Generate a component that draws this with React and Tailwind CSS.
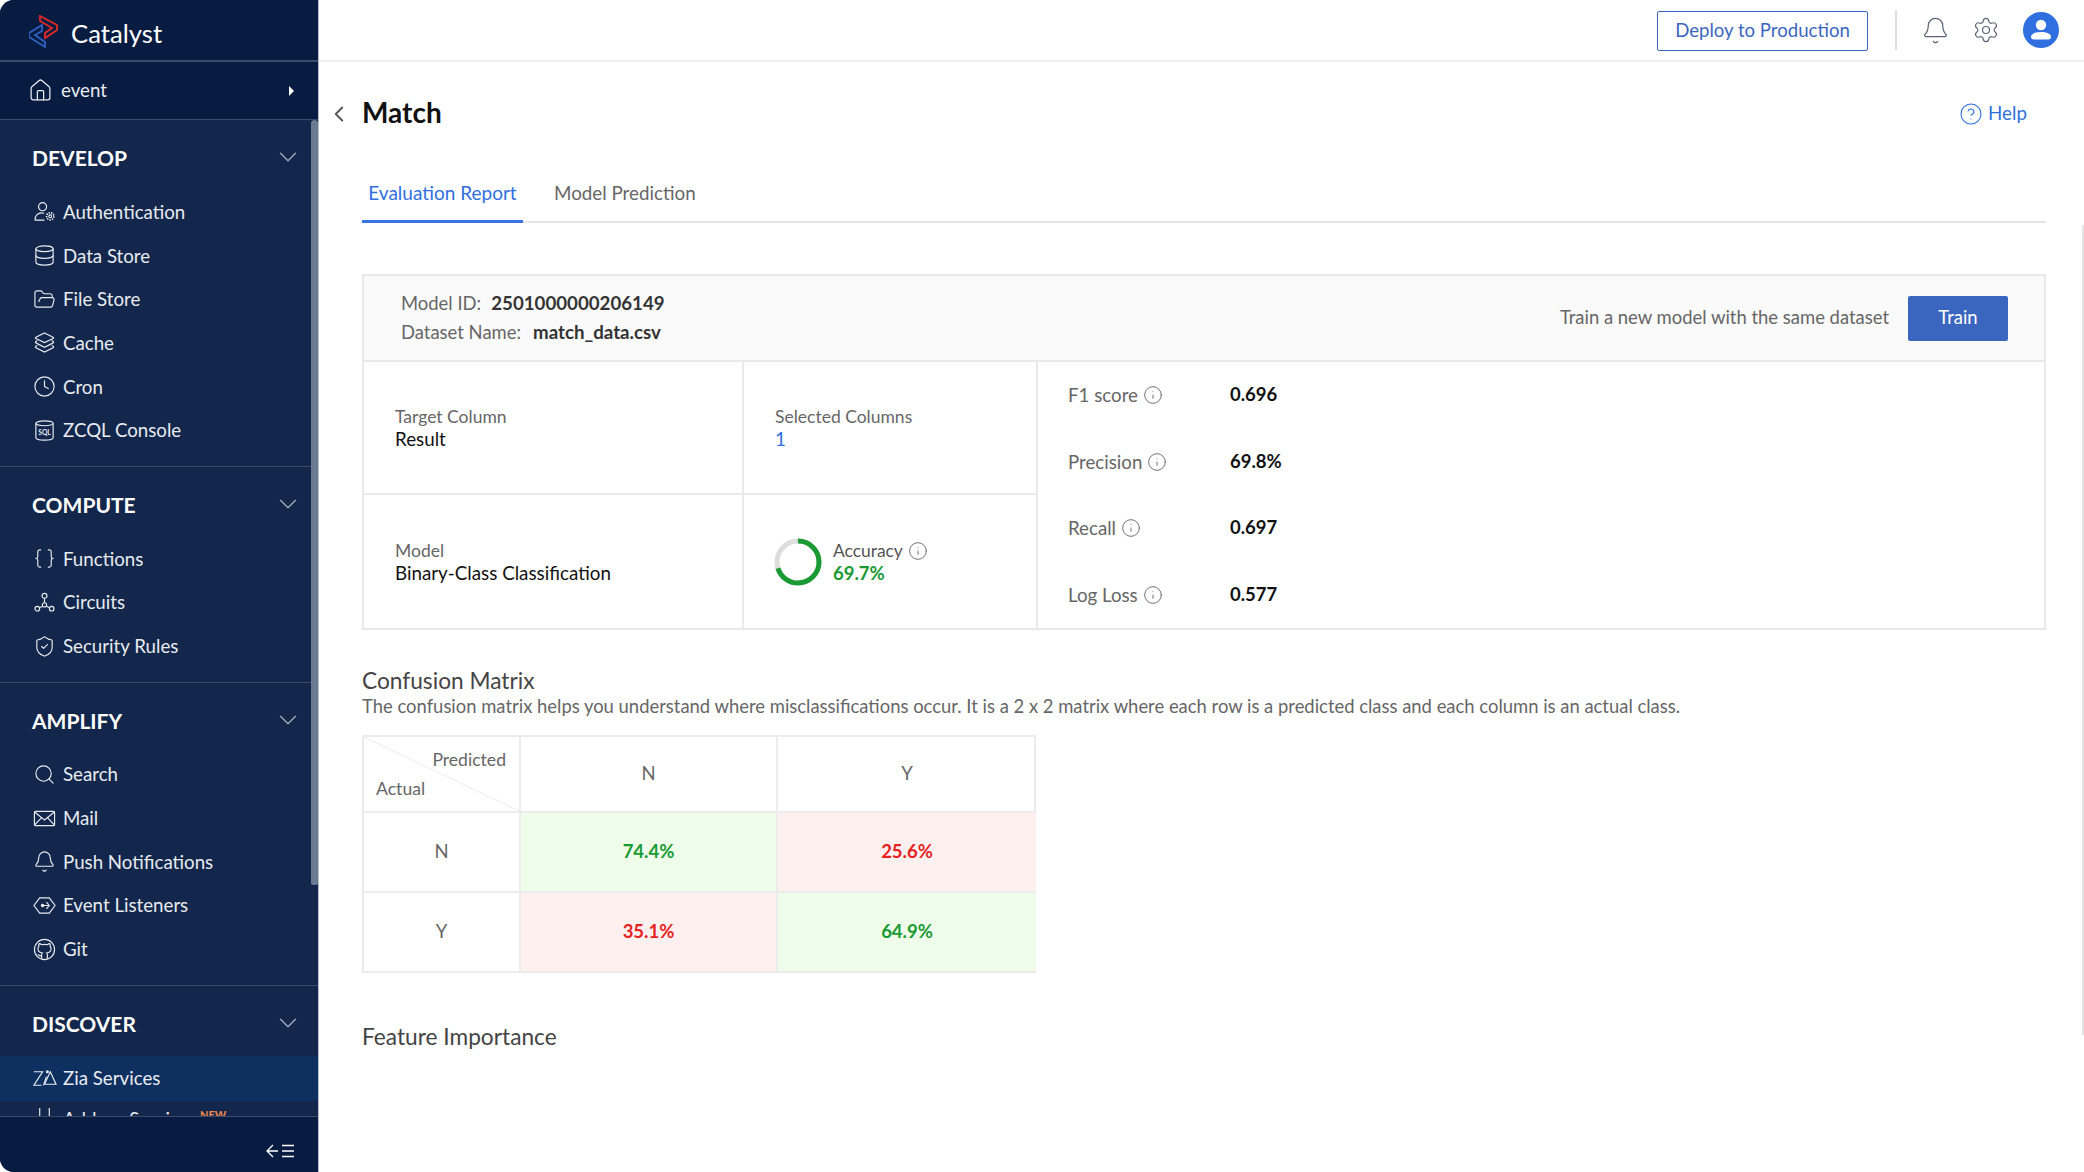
import React from 'react';
import { House, Database, FolderOpen, Clock, Braces, Search, Bell, ShieldCheck, ChevronDown, ChevronLeft, Settings, CircleHelp, Info } from 'lucide-react';

const AuthIcon = (p) => (
    <svg viewBox="0 0 24 24" fill="none" stroke="currentColor" strokeWidth="1.2" {...p}>
        <circle cx="10" cy="7" r="4.2" />
        <path d="M2 21c0-4.5 3-7.5 7-7.5 1 0 1.8.1 2.6.4M2 21h10" />
        <circle cx="18" cy="17" r="1.5" />
        <circle cx="18" cy="17" r="3.8" strokeDasharray="1.6 1" strokeWidth="1.6" />
    </svg>
);

const SqlIcon = (p) => (
    <svg viewBox="0 0 24 24" fill="none" stroke="currentColor" strokeWidth="1.2" {...p}>
        <ellipse cx="12" cy="4.5" rx="9" ry="2.5" />
        <path d="M3 4.5v15c0 1.4 4 2.5 9 2.5s9-1.1 9-2.5v-15" />
        <text x="12" y="16.5" textAnchor="middle" fontSize="7" fontWeight="700" fill="currentColor" stroke="none" fontFamily="Lato, sans-serif">SQL</text>
    </svg>
);

const CacheIcon = (p) => (
    <svg viewBox="0 0 24 24" fill="none" stroke="currentColor" strokeWidth="1.2" {...p}>
        <path d="M12 2 21 6.5c.6.4.6 1 0 1.4L12 12 3 7.9c-.6-.4-.6-1 0-1.4z" />
        <path d="M4.5 10 3 11c-.6.4-.6 1 0 1.4L12 17l9-4.6c.6-.4.6-1 0-1.4l-1.5-1" />
        <path d="M4.5 15 3 16c-.6.4-.6 1 0 1.4L12 22l9-4.6c.6-.4.6-1 0-1.4l-1.5-1" />
    </svg>
);

const CircuitIcon = (p) => (
    <svg viewBox="0 0 24 24" fill="none" stroke="currentColor" strokeWidth="1.2" {...p}>
        <circle cx="12" cy="5" r="2.6" />
        <circle cx="4.5" cy="18.5" r="2.4" />
        <circle cx="12" cy="14.5" r="2.2" />
        <circle cx="19.5" cy="18.5" r="2.4" />
        <path d="M12 7.6v4.7M10.2 16l-3.6 1.4M13.8 16l3.6 1.4" />
    </svg>
);

const MailIcon = (p) => (
    <svg viewBox="0 0 24 24" fill="none" stroke="currentColor" strokeWidth="1.2" {...p}>
        <rect x="1.5" y="4.5" width="21" height="15" rx="1" />
        <path d="M2 5.5l10 8 10-8M2 18.5l7-7.5M22 18.5l-7-7.5" />
    </svg>
);

const EventIcon = (p) => (
    <svg viewBox="0 0 24 24" fill="none" stroke="currentColor" strokeWidth="1.2" {...p}>
        <path d="M7 4h10l6 8-6 8H7l-6-8z" />
        <circle cx="10" cy="12" r="1.3" fill="currentColor" />
        <path d="M14 8.5 17 12l-3 3.5M10 12h6" />
    </svg>
);

const GitIcon = (p) => (
    <svg viewBox="0 0 24 24" fill="none" stroke="currentColor" strokeWidth="1.2" {...p}>
        <circle cx="12" cy="12" r="10.5" />
        <path d="M9 21v-3.2c0-1 .3-1.7.8-2.2-2.7-.3-4.6-1.4-4.6-4.4 0-1 .4-1.9 1-2.6-.1-.4-.4-1.4.1-2.6 0 0 1-.3 2.8 1 .9-.2 1.9-.3 2.9-.3s2 .1 2.9.3c1.8-1.3 2.8-1 2.8-1 .5 1.2.2 2.2.1 2.6.6.7 1 1.6 1 2.6 0 3-1.9 4.1-4.6 4.4.5.5.8 1.2.8 2.2V21" />
        <path d="M9 18.5c-2 .6-3-.3-3.8-1.6" />
    </svg>
);

const ZiaIcon = (p) => (
    <svg viewBox="0 0 26 24" fill="none" stroke="currentColor" strokeWidth="1.2" {...p}>
        <path d="M2 5h9L2 19h8" />
        <path d="M12 19l3-9" />
        <circle cx="16" cy="5" r="1" fill="currentColor" />
        <path d="M19 5l6 13H13z" />
    </svg>
);

const AddonIcon = (p) => (
    <svg viewBox="0 0 24 24" fill="none" stroke="currentColor" strokeWidth="1.2" {...p}>
        <path d="M7 1v9h10V1M12 10v12" />
    </svg>
);

const NavIcon = ({ icon: Icon, w = 23 }) => (
    <span className="w-[31px] h-[24px] flex items-center justify-center shrink-0 mr-[3px]">
        <Icon width={w} height={w} strokeWidth={1.2} />
    </span>
);

const sections = [
    { title: 'DEVELOP', items: [['Authentication', AuthIcon], ['Data Store', Database], ['File Store', FolderOpen], ['Cache', CacheIcon], ['Cron', Clock], ['ZCQL Console', SqlIcon]] },
    { title: 'COMPUTE', items: [['Functions', Braces], ['Circuits', CircuitIcon], ['Security Rules', ShieldCheck]] },
    { title: 'AMPLIFY', items: [['Search', Search], ['Mail', MailIcon], ['Push Notifications', Bell], ['Event Listeners', EventIcon], ['Git', GitIcon]] },
];

const SectionTitle = ({ title }) => (
    <div className="flex items-center justify-between pl-[32px] pr-[15px] h-[28px] mb-[18px]">
        <span className="text-[21px] font-bold text-white">{title}</span>
        <ChevronDown size={30} strokeWidth={1} className="text-[#a3adbd] -mt-[2px]" />
    </div>
);

const Sidebar = () => (
    <aside className="w-[319px] shrink-0 h-full bg-[#12274b] rounded-l-[14px] overflow-hidden flex flex-col relative text-[#e8ebf0] border-r border-[#b8bfca]">
        <div className="bg-[#081c42] h-[62px] shrink-0 flex items-center pl-[29px] pt-[4px] border-b-2 border-[#3a4a68]">
            <svg viewBox="29 15 30 34" width="30" height="34" fill="none" strokeWidth="1.8">
                <polygon points="40,16 57,25 57,30 45,38 45,33 52,28 40,21" stroke="#e22b27" />
                <polygon points="42,25 29,33 29,37 45,47 45,42 35,35 42,31" stroke="#2f62c5" />
            </svg>
            <span className="ml-[12px] mt-[3px] text-[25.7px] text-white leading-none">Catalyst</span>
        </div>
        <div className="bg-[#081c42] h-[58px] shrink-0 flex items-center pl-[28px] pr-[24px] border-b border-[#3a4a68]">
            <House size={25} strokeWidth={1.2} />
            <span className="ml-[8px] text-[18.7px] flex-1">event</span>
            <span className="w-0 h-0 border-y-[5px] border-y-transparent border-l-[5px] border-l-white" />
        </div>
        <div className="flex-1 overflow-hidden">
            {sections.map((s) => (
                <div key={s.title} className="pt-[24px] pb-[13.7px] border-b border-[#3a4a68] box-content">
                    <SectionTitle title={s.title} />
                    {s.items.map(([label, icon]) => (
                        <div key={label} className="h-[43.7px] flex items-center pl-[29px] text-[18.7px]">
                            <NavIcon icon={icon} />
                            <span>{label}</span>
                        </div>
                    ))}
                </div>
            ))}
            <div className="pt-[24px]">
                <SectionTitle title="DISCOVER" />
                <div className="h-[45px] flex items-center pl-[29px] text-[18.7px] bg-[#0d3060]">
                    <NavIcon icon={ZiaIcon} w={25} />
                    <span>Zia Services</span>
                </div>
                <div className="h-[36px] flex items-center pl-[29px] text-[18.7px] relative">
                    <NavIcon icon={AddonIcon} />
                    <span>Add-on Services</span>
                    <span className="absolute left-[200px] top-[6px] text-[11px] font-bold text-[#f08a4b]">NEW</span>
                </div>
            </div>
        </div>
        <div className="bg-[#081c42] h-[56px] shrink-0 border-t border-[#3a4a68] flex items-center justify-end pr-[24px] pt-[12px]">
            <svg width="28" height="14" viewBox="0 0 28 14" fill="none" stroke="#ffffff" strokeWidth="1.3">
                <path d="M7 1 1 7l6 6M1 7h11M16 1.5h12M16 7h12M16 12.5h12" />
            </svg>
        </div>
        <div className="absolute right-0 top-[120px] h-[765px] w-[7px] bg-[#6b7a90] rounded-t-[4px] rounded-b-[2px]" />
    </aside>
);

const Metric = ({ label, value }) => (
    <div className="flex-1 flex items-center pl-[30px]">
        <div className="w-[162px] flex items-center gap-[5px] text-[18.7px] text-[#666666]">
            <span>{label}</span>
            <Info size={20} strokeWidth={1.1} className="text-[#666666]" />
        </div>
        <span className="text-[18.5px] font-bold text-[#111111]">{value}</span>
    </div>
);

const Cell = ({ label, children }) => (
    <div className="h-full flex flex-col justify-center pl-[31px] text-[18.8px] leading-[22px]">
        <div className="text-[#666666] text-[17.5px]">{label}</div>
        {children}
    </div>
);

const Donut = () => (
    <svg width="48" height="48" viewBox="0 0 48 48" fill="none" strokeWidth="5">
        <circle cx="24" cy="24" r="21" stroke="#dddddd" />
        <circle cx="24" cy="24" r="21" stroke="#1a9a33" strokeDasharray="92 132" transform="rotate(-90 24 24)" />
    </svg>
);

const matrixCell = 'flex items-center justify-center border-l-2 border-t-2 border-[#ececec] text-[18.5px]';
const good = 'bg-[#eefde9] text-[#1a9a33] font-bold';
const bad = 'bg-[#fdf0ef] text-[#e5231f] font-bold';

const Matrix = () => (
    <div className="w-[674px] grid grid-cols-[157px_257px_260px] grid-rows-[76px_80px_80px] border-r-2 border-b-2 border-[#ececec] text-[#666666]">
        <div className="relative border-l-2 border-t-2 border-[#ececec] text-[17.6px]">
            <svg className="absolute inset-0 w-full h-full" viewBox="0 0 155 74" preserveAspectRatio="none">
                <line x1="0" y1="0" x2="155" y2="74" stroke="#ececec" />
            </svg>
            <span className="absolute right-[13px] top-[10px]">Predicted</span>
            <span className="absolute left-[12px] top-[39px]">Actual</span>
        </div>
        <div className={matrixCell}>N</div>
        <div className={matrixCell}>Y</div>
        <div className={matrixCell}>N</div>
        <div className={`${matrixCell} ${good}`}>74.4%</div>
        <div className={`${matrixCell} ${bad}`}>25.6%</div>
        <div className={matrixCell}>Y</div>
        <div className={`${matrixCell} ${bad}`}>35.1%</div>
        <div className={`${matrixCell} ${good}`}>64.9%</div>
    </div>
);

const App = () => (
    <div className="w-[2084px] h-[1172px] flex overflow-hidden bg-white font-['Lato',sans-serif] relative">
        <Sidebar />
        <main className="flex-1 min-w-0 flex flex-col">
            <header className="h-[62px] shrink-0 border-b-2 border-[#eeeef0] flex items-center justify-end pr-[25px]">
                <button className="w-[211px] h-[40px] border border-[#3b66c0] rounded-[2px] text-[#3b66c0] text-[18.6px] mt-[1px]">Deploy to Production</button>
                <div className="w-[2px] h-[40px] bg-[#dddddd] ml-[27px] mr-[24px]" />
                <Bell size={29} strokeWidth={1} className="text-[#5a6475]" />
                <Settings size={28} strokeWidth={1} className="text-[#5a6475] ml-[22px]" />
                <svg width="36" height="36" viewBox="0 0 36 36" className="ml-[23px]">
                    <circle cx="18" cy="18" r="18" fill="#2f6fe0" />
                    <circle cx="18" cy="13" r="5.2" fill="#fff" />
                    <path d="M8 25c0-3.5 4.5-5 10-5s10 1.5 10 5c0 1.5-1 2.5-3 2.5H11c-2 0-3-1-3-2.5z" fill="#fff" />
                </svg>
            </header>
            <div className="flex-1 pl-[43px] pr-[38px]">
                <div className="h-[103px] flex items-center relative">
                    <ChevronLeft size={26} strokeWidth={1.7} className="absolute -left-[36px] top-[39px] text-[#555555]" />
                    <h1 className="text-[28px] font-bold text-[#111111] -mt-[4px]">Match</h1>
                    <a className="ml-auto mr-[19px] flex items-center gap-[5px] text-[18.8px] text-[#2f6fe0]">
                        <CircleHelp size={24} strokeWidth={1.1} />
                        Help
                    </a>
                </div>
                <div className="h-[58px] border-b-2 border-[#e6e6e6] flex items-end text-[19px]">
                    <div className="w-[161px] h-[58px] -mb-[2px] border-b-[3px] border-[#3a74e0] text-[#2f6fe0] flex items-center justify-center pt-[2px]">Evaluation Report</div>
                    <div className="ml-[31px] h-[58px] text-[#666666] text-[18.8px] flex items-center pt-[2px]">Model Prediction</div>
                </div>
                <section className="mt-[51px] border-2 border-[#e9e9e9]">
                    <div className="h-[86px] bg-[#fafafa] border-b-2 border-[#e9e9e9] flex items-center pl-[37px] pr-[36px] text-[18.45px] text-[#666666]">
                        <div className="flex-1 leading-[29px]">
                            <div>Model ID:<span className="ml-[10px] font-bold text-[#333333] text-[18.7px]">2501000000206149</span></div>
                            <div>Dataset Name:<span className="ml-[12px] font-bold text-[#333333] text-[18.7px]">match_data.csv</span></div>
                        </div>
                        <span>Train a new model with the same dataset</span>
                        <button className="ml-[19px] w-[100px] h-[45px] bg-[#3b66c0] rounded-[2px] text-white">Train</button>
                    </div>
                    <div className="flex h-[266px]">
                        <div className="w-[674px] shrink-0 border-r-2 border-[#e9e9e9] grid grid-cols-[380px_1fr] grid-rows-2">
                            <div className="border-r-2 border-b-2 border-[#e9e9e9]">
                                <Cell label="Target Column"><div className="text-[#111111]">Result</div></Cell>
                            </div>
                            <div className="border-b-2 border-[#e9e9e9]">
                                <Cell label="Selected Columns"><div className="text-[#2f6fe0]">1</div></Cell>
                            </div>
                            <div className="border-r-2 border-[#e9e9e9]">
                                <Cell label="Model"><div className="text-[#111111]">Binary-Class Classification</div></Cell>
                            </div>
                            <div className="flex items-center pl-[30px] gap-[11px]">
                                <Donut />
                                <div className="text-[17.4px] leading-[22px]">
                                    <div className="flex items-center gap-[5px] text-[#555555]">Accuracy<Info size={20} strokeWidth={1.1} className="text-[#666666]" /></div>
                                    <div className="text-[18.5px] font-bold text-[#1a9a33]">69.7%</div>
                                </div>
                            </div>
                        </div>
                        <div className="flex-1 flex flex-col">
                            <Metric label="F1 score" value="0.696" />
                            <Metric label="Precision" value="69.8%" />
                            <Metric label="Recall" value="0.697" />
                            <Metric label="Log Loss" value="0.577" />
                        </div>
                    </div>
                </section>
                <h2 className="mt-[36px] text-[22.7px] leading-[30px] text-[#444444]">Confusion Matrix</h2>
                <p className="text-[18.43px] leading-[21px] text-[#666666] whitespace-nowrap">The confusion matrix helps you understand where misclassifications occur. It is a 2 x 2 matrix where each row is a predicted class and each column is an actual class.</p>
                <div className="mt-[18px]"><Matrix /></div>
                <h2 className="mt-[49px] text-[22.7px] leading-[30px] text-[#444444]">Feature Importance</h2>
            </div>
        </main>
        <div className="absolute right-0 top-[225px] h-[810px] w-[2px] bg-[#e4e4e4]" />
    </div>
);

export default App;
